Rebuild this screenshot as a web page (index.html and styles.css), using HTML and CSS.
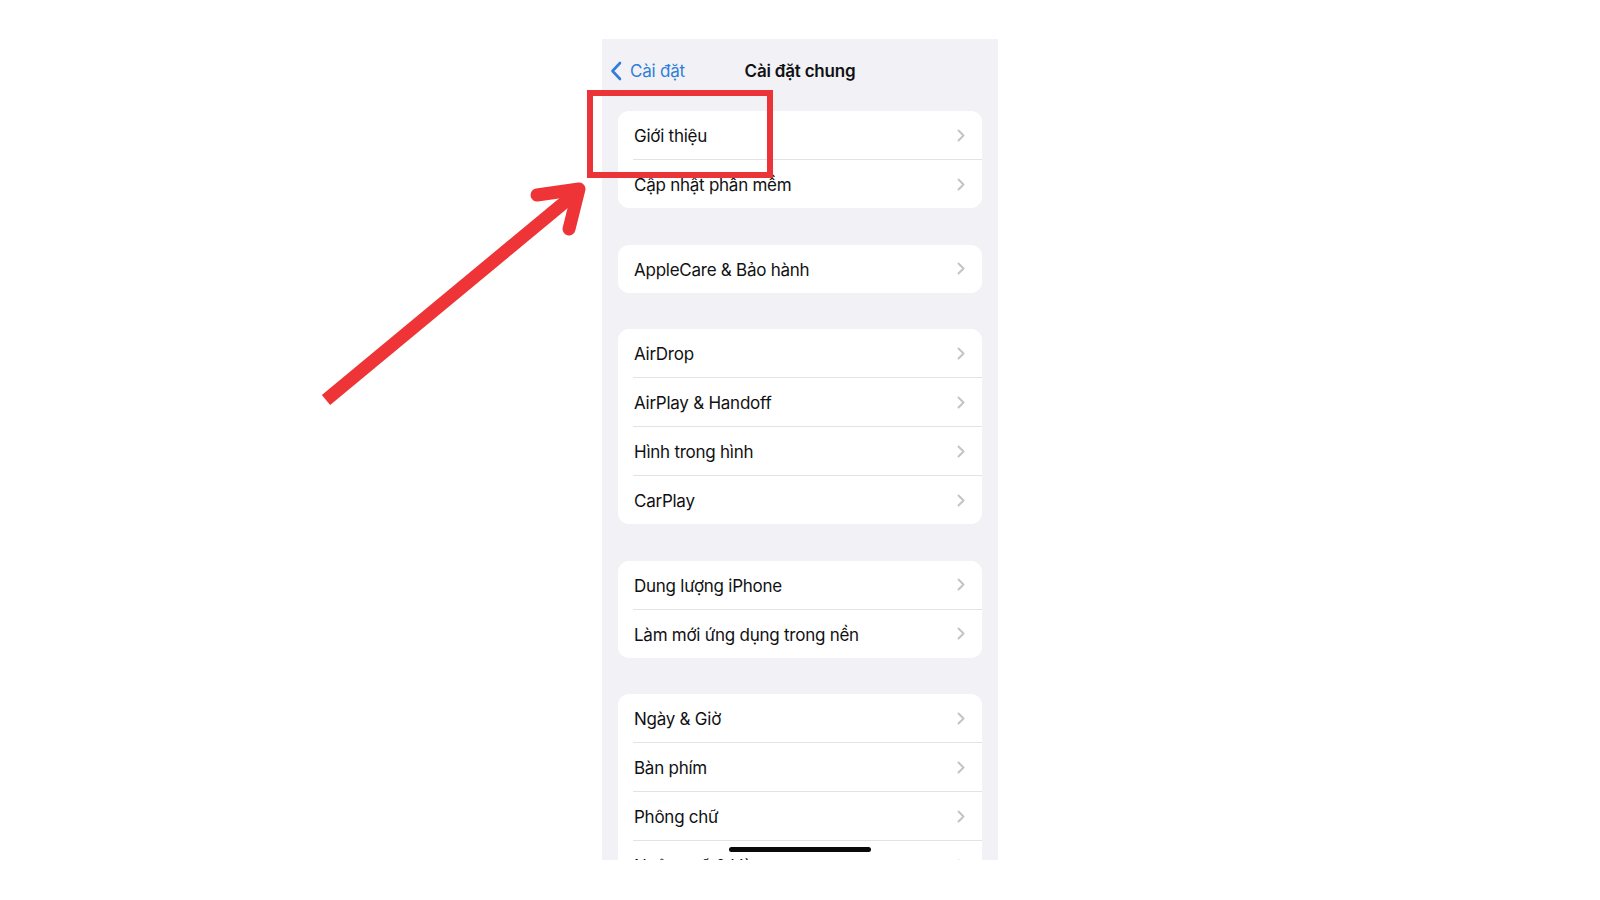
FILE: index.html
```html
<!DOCTYPE html>
<html lang="vi">
<head>
<meta charset="utf-8">
<title>Cài đặt chung</title>
<link rel="stylesheet" href="styles.css">
</head>
<body>
<main class="stage">
  <section class="phone">
    <header class="nav">
      <a class="back">
        <svg class="back-chev" viewBox="0 0 12 20" width="12" height="20"><path d="M10 2 L2.5 10 L10 18" fill="none" stroke="#2f7fd8" stroke-width="2.6" stroke-linecap="round" stroke-linejoin="round"/></svg>
        <span>Cài đặt</span>
      </a>
      <h1 class="title">Cài đặt chung</h1>
      <span></span>
    </header>
    <div class="groups">
      <ul class="group">
        <li class="row"><span>Giới thiệu</span><svg class="chev" viewBox="0 0 8 13" width="8" height="13"><path d="M1.5 1.5 L6.5 6.5 L1.5 11.5" fill="none" stroke="#c4c4c8" stroke-width="2" stroke-linecap="round" stroke-linejoin="round"/></svg></li>
        <li class="row"><span>Cập nhật phần mềm</span><svg class="chev" viewBox="0 0 8 13" width="8" height="13"><path d="M1.5 1.5 L6.5 6.5 L1.5 11.5" fill="none" stroke="#c4c4c8" stroke-width="2" stroke-linecap="round" stroke-linejoin="round"/></svg></li>
      </ul>
      <ul class="group">
        <li class="row"><span>AppleCare &amp; Bảo hành</span><svg class="chev" viewBox="0 0 8 13" width="8" height="13"><path d="M1.5 1.5 L6.5 6.5 L1.5 11.5" fill="none" stroke="#c4c4c8" stroke-width="2" stroke-linecap="round" stroke-linejoin="round"/></svg></li>
      </ul>
      <ul class="group">
        <li class="row"><span>AirDrop</span><svg class="chev" viewBox="0 0 8 13" width="8" height="13"><path d="M1.5 1.5 L6.5 6.5 L1.5 11.5" fill="none" stroke="#c4c4c8" stroke-width="2" stroke-linecap="round" stroke-linejoin="round"/></svg></li>
        <li class="row"><span>AirPlay &amp; Handoff</span><svg class="chev" viewBox="0 0 8 13" width="8" height="13"><path d="M1.5 1.5 L6.5 6.5 L1.5 11.5" fill="none" stroke="#c4c4c8" stroke-width="2" stroke-linecap="round" stroke-linejoin="round"/></svg></li>
        <li class="row"><span>Hình trong hình</span><svg class="chev" viewBox="0 0 8 13" width="8" height="13"><path d="M1.5 1.5 L6.5 6.5 L1.5 11.5" fill="none" stroke="#c4c4c8" stroke-width="2" stroke-linecap="round" stroke-linejoin="round"/></svg></li>
        <li class="row"><span>CarPlay</span><svg class="chev" viewBox="0 0 8 13" width="8" height="13"><path d="M1.5 1.5 L6.5 6.5 L1.5 11.5" fill="none" stroke="#c4c4c8" stroke-width="2" stroke-linecap="round" stroke-linejoin="round"/></svg></li>
      </ul>
      <ul class="group">
        <li class="row"><span>Dung lượng iPhone</span><svg class="chev" viewBox="0 0 8 13" width="8" height="13"><path d="M1.5 1.5 L6.5 6.5 L1.5 11.5" fill="none" stroke="#c4c4c8" stroke-width="2" stroke-linecap="round" stroke-linejoin="round"/></svg></li>
        <li class="row"><span>Làm mới ứng dụng trong nền</span><svg class="chev" viewBox="0 0 8 13" width="8" height="13"><path d="M1.5 1.5 L6.5 6.5 L1.5 11.5" fill="none" stroke="#c4c4c8" stroke-width="2" stroke-linecap="round" stroke-linejoin="round"/></svg></li>
      </ul>
      <ul class="group">
        <li class="row"><span>Ngày &amp; Giờ</span><svg class="chev" viewBox="0 0 8 13" width="8" height="13"><path d="M1.5 1.5 L6.5 6.5 L1.5 11.5" fill="none" stroke="#c4c4c8" stroke-width="2" stroke-linecap="round" stroke-linejoin="round"/></svg></li>
        <li class="row"><span>Bàn phím</span><svg class="chev" viewBox="0 0 8 13" width="8" height="13"><path d="M1.5 1.5 L6.5 6.5 L1.5 11.5" fill="none" stroke="#c4c4c8" stroke-width="2" stroke-linecap="round" stroke-linejoin="round"/></svg></li>
        <li class="row"><span>Phông chữ</span><svg class="chev" viewBox="0 0 8 13" width="8" height="13"><path d="M1.5 1.5 L6.5 6.5 L1.5 11.5" fill="none" stroke="#c4c4c8" stroke-width="2" stroke-linecap="round" stroke-linejoin="round"/></svg></li>
        <li class="row"><span>Ngôn ngữ &amp; Vùng</span><svg class="chev" viewBox="0 0 8 13" width="8" height="13"><path d="M1.5 1.5 L6.5 6.5 L1.5 11.5" fill="none" stroke="#c4c4c8" stroke-width="2" stroke-linecap="round" stroke-linejoin="round"/></svg></li>
      </ul>
    </div>
    <div class="home-indicator"></div>
  </section>
  <svg class="annotation" width="1600" height="900" viewBox="0 0 1600 900">
    <rect x="590" y="93" width="180" height="82" fill="none" stroke="#ea3437" stroke-width="6"/>
    <line x1="326" y1="400" x2="577" y2="192" stroke="#ee3437" stroke-width="13" stroke-linecap="butt"/>
    <polyline points="537,195 579,189 569,229" fill="none" stroke="#ee3437" stroke-width="13" stroke-linecap="round" stroke-linejoin="round"/>
  </svg>
</main>
</body>
</html>
```

FILE: styles.css
```css
* { box-sizing: border-box; }
html, body { margin: 0; padding: 0; background: #ffffff; }
body {
  font-family: Inter, "Noto Sans", "Liberation Sans", sans-serif;
  color: #111113;
}
.stage {
  position: relative;
  width: 1600px;
  height: 900px;
  display: flex;
  justify-content: center;
  padding-top: 39px;
  overflow: hidden;
}
.phone {
  position: relative;
  width: 396px;
  height: 821px;
  background: #f1f1f6;
  overflow: hidden;
}
.nav {
  height: 62px;
  display: grid;
  grid-template-columns: 1fr auto 1fr;
  align-items: center;
  padding: 2px 8px 0;
}
.back {
  display: flex;
  align-items: center;
  gap: 8px;
  color: #2f7fd8;
  font-size: 17px;
  letter-spacing: -0.2px;
}
.back-chev { display: block; margin-top: 0; }
.title {
  margin: 0;
  font-size: 17px;
  font-weight: 600;
  letter-spacing: -0.2px;
  color: #111113;
}
.groups {
  display: flex;
  flex-direction: column;
  gap: 36.5px;
  padding: 10px 16px 0;
}
.group {
  list-style: none;
  margin: 0;
  padding: 0;
  background: #ffffff;
  border-radius: 11px;
  overflow: hidden;
}
.row {
  height: 48px;
  display: flex;
  align-items: center;
  justify-content: space-between;
  padding: 2px 17px 0 16px;
  font-size: 17px;
  letter-spacing: -0.25px;
  position: relative;
}
.row + .row { margin-top: 1px; }
.row + .row::before {
  content: "";
  position: absolute;
  left: 15px;
  right: 0;
  top: -1px;
  height: 1px;
  background: #e3e3e7;
}
.chev {
  display: block;
  flex: none;
  margin-top: -2px;
}
.home-indicator {
  position: absolute;
  left: 127px;
  top: 808px;
  width: 142px;
  height: 5px;
  border-radius: 3px;
  background: #0a0a0a;
}
.annotation {
  position: absolute;
  left: 0;
  top: 0;
  pointer-events: none;
}
```
